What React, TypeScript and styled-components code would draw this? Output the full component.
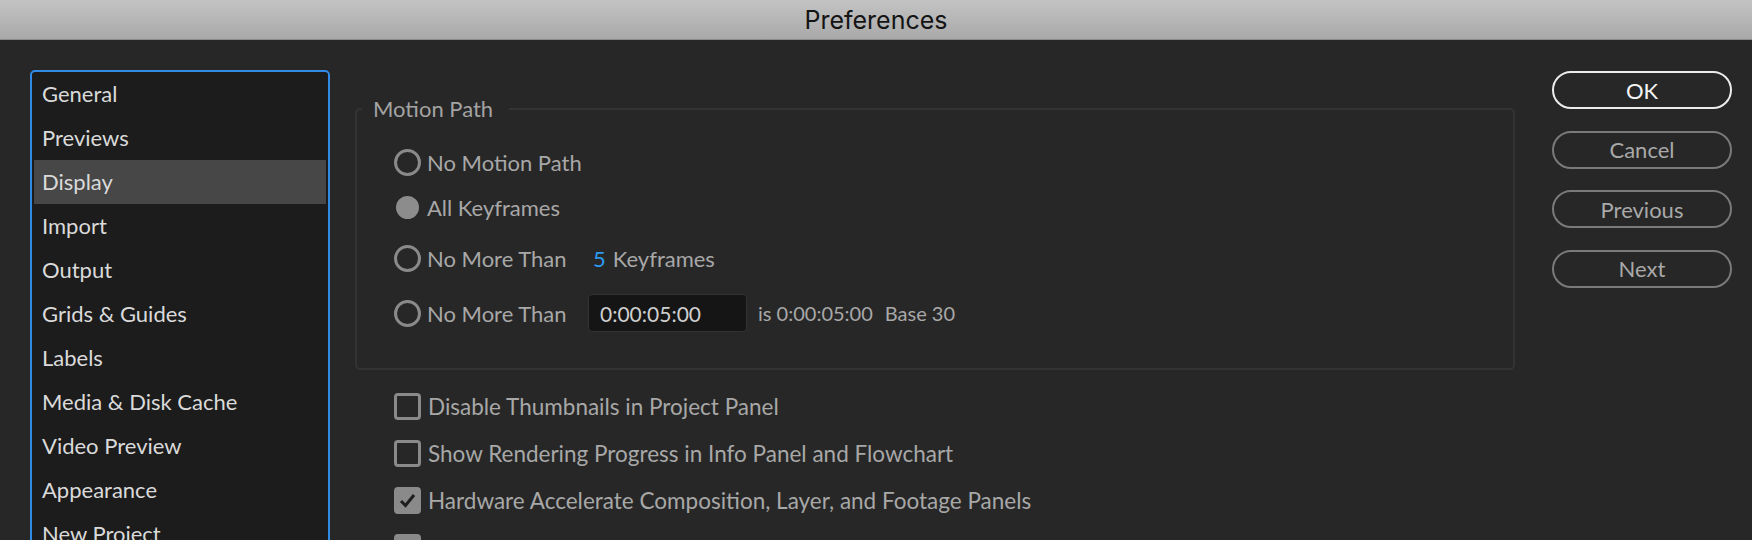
import React from "react";
import styled, { createGlobalStyle } from "styled-components";

const GlobalStyle = createGlobalStyle`
  html, body {
    margin: 0;
    padding: 0;
    background: #272727;
  }
  body {
    font-family: Lato, "Open Sans", sans-serif;
  }
`;

const Window = styled.div`
  width: 1752px;
  height: 540px;
  overflow: hidden;
  background: #272727;
  display: flex;
  flex-direction: column;
`;

const TitleBar = styled.div`
  flex: none;
  height: 39px;
  border-bottom: 1px solid #8a8a8a;
  background: linear-gradient(#c3c3c3, #a9a9a9);
  display: flex;
  align-items: center;
  justify-content: center;
  font-family: Inter, "Liberation Sans", sans-serif;
  font-size: 25px;
  color: #141414;
`;

const Body = styled.div`
  flex: 1;
  min-height: 0;
  display: flex;
  align-items: flex-start;
  padding: 30px 20px 0 30px;
`;

const Sidebar = styled.ul`
  flex: none;
  width: 300px;
  height: 520px;
  box-sizing: border-box;
  margin: 0;
  padding: 0 2px;
  list-style: none;
  background: #1c1c1c;
  border: 2px solid #2f8be6;
  border-radius: 5px;
`;

const NavItem = styled.li<{ $active?: boolean }>`
  height: 44px;
  display: flex;
  align-items: center;
  padding: 0 0 1px 8px;
  box-sizing: border-box;
  font-size: 22px;
  color: #dadada;
  background: ${(p) => (p.$active ? "#474747" : "transparent")};
`;

const Main = styled.div`
  flex: none;
  width: 1160px;
  margin: 26px 0 0 25px;
`;

const Group = styled.fieldset`
  margin: 0;
  padding: 0 0 28px 0;
  border: 2px solid #333333;
  border-radius: 5px;
`;

const Legend = styled.legend`
  margin-left: 5px;
  padding: 0 16px 0 11px;
  font-size: 22px;
  line-height: 26px;
  color: #a3a3a3;
`;

const Options = styled.div`
  padding: 18px 0 0 37px;
`;

const OptionRow = styled.div<{ $h: number }>`
  height: ${(p) => p.$h}px;
  display: flex;
  align-items: center;
  font-size: 22px;
  color: #a8a8a8;
`;

const Radio = styled.span<{ $on?: boolean }>`
  flex: none;
  width: 27px;
  height: 27px;
  box-sizing: border-box;
  border-radius: 50%;
  border: ${(p) => (p.$on ? "2px solid #272727" : "3px solid #8a8a8a")};
  background: ${(p) => (p.$on ? "#8c8c8c" : "transparent")};
`;

const OptionLabel = styled.span`
  width: 161px;
  margin-left: 6px;
  white-space: nowrap;
`;

const HotNumber = styled.span`
  padding-left: 5px;
  margin-right: 7px;
  color: #2e9bf2;
`;

const TimeField = styled.div`
  width: 159px;
  height: 38px;
  box-sizing: border-box;
  display: flex;
  align-items: center;
  padding-left: 11px;
  background: #151515;
  border: 1px solid #333333;
  border-radius: 4px;
  font-size: 21px;
  color: #cfcfcf;
`;

const Note = styled.span`
  margin-left: 11px;
  font-size: 20px;
  color: #a8a8a8;
  display: flex;
  gap: 12px;
`;

const Checks = styled.div`
  margin-top: 13px;
  padding-left: 39px;
`;

const CheckRow = styled.div`
  height: 47px;
  display: flex;
  align-items: center;
  font-size: 22.5px;
  color: #a8a8a8;
  white-space: nowrap;
`;

const Box = styled.span<{ $on?: boolean }>`
  flex: none;
  width: 27px;
  height: 27px;
  box-sizing: border-box;
  border-radius: 4px;
  border: 3px solid #8a8a8a;
  background: ${(p) => (p.$on ? "#8a8a8a" : "transparent")};
  display: flex;
  align-items: center;
  justify-content: center;
`;

const CheckText = styled.span`
  margin-left: 7px;
`;

const Buttons = styled.div`
  flex: none;
  width: 180px;
  margin: 1px 0 0 37px;
  display: flex;
  flex-direction: column;
  gap: 21.5px;
`;

const Button = styled.button<{ $primary?: boolean }>`
  height: 38px;
  box-sizing: border-box;
  border-radius: 19px;
  background: transparent;
  border: 2px solid ${(p) => (p.$primary ? "#ececec" : "#7a7a7a")};
  color: ${(p) => (p.$primary ? "#f4f4f4" : "#a9a9a9")};
  font-family: Lato, "Open Sans", sans-serif;
  font-size: 22px;
  padding: 0;
`;

const navItems = [
  "General",
  "Previews",
  "Display",
  "Import",
  "Output",
  "Grids & Guides",
  "Labels",
  "Media & Disk Cache",
  "Video Preview",
  "Appearance",
  "New Project",
];

// the last row runs off the bottom of the window: only its box top shows
const checks = [
  { label: "Disable Thumbnails in Project Panel", on: false },
  { label: "Show Rendering Progress in Info Panel and Flowchart", on: false },
  { label: "Hardware Accelerate Composition, Layer, and Footage Panels", on: true },
  { label: "", on: true },
];

function Tick() {
  return (
    <svg width="17" height="15" viewBox="0 0 17 15">
      <path d="M2 8 L6.5 12.5 L15 2" fill="none" stroke="#1e1e1e" strokeWidth="3" />
    </svg>
  );
}

export default function App() {
  return (
    <Window>
      <GlobalStyle />
      <TitleBar>Preferences</TitleBar>
      <Body>
        <Sidebar>
          {navItems.map((item) => (
            <NavItem key={item} $active={item === "Display"}>
              {item}
            </NavItem>
          ))}
        </Sidebar>

        <Main>
          <Group>
            <Legend>Motion Path</Legend>
            <Options>
              <OptionRow $h={44}>
                <Radio />
                <OptionLabel>No Motion Path</OptionLabel>
              </OptionRow>
              <OptionRow $h={46}>
                <Radio $on />
                <OptionLabel>All Keyframes</OptionLabel>
              </OptionRow>
              <OptionRow $h={56}>
                <Radio />
                <OptionLabel>No More Than</OptionLabel>
                <HotNumber>5</HotNumber>
                Keyframes
              </OptionRow>
              <OptionRow $h={54}>
                <Radio />
                <OptionLabel>No More Than</OptionLabel>
                <TimeField>0:00:05:00</TimeField>
                <Note>
                  <span>is 0:00:05:00</span>
                  <span>Base 30</span>
                </Note>
              </OptionRow>
            </Options>
          </Group>

          <Checks>
            {checks.map((c, i) => (
              <CheckRow key={i}>
                <Box $on={c.on}>{c.on && <Tick />}</Box>
                {c.label && <CheckText>{c.label}</CheckText>}
              </CheckRow>
            ))}
          </Checks>
        </Main>

        <Buttons>
          <Button $primary>OK</Button>
          <Button>Cancel</Button>
          <Button>Previous</Button>
          <Button>Next</Button>
        </Buttons>
      </Body>
    </Window>
  );
}
